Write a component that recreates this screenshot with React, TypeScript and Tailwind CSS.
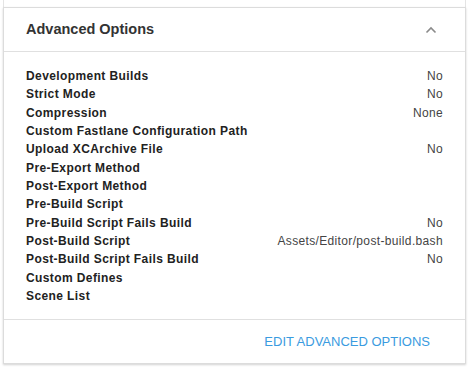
import React from 'react';

const options: { label: string; value?: string }[] = [
  { label: 'Development Builds', value: 'No' },
  { label: 'Strict Mode', value: 'No' },
  { label: 'Compression', value: 'None' },
  { label: 'Custom Fastlane Configuration Path' },
  { label: 'Upload XCArchive File', value: 'No' },
  { label: 'Pre-Export Method' },
  { label: 'Post-Export Method' },
  { label: 'Pre-Build Script' },
  { label: 'Pre-Build Script Fails Build', value: 'No' },
  { label: 'Post-Build Script', value: 'Assets/Editor/post-build.bash' },
  { label: 'Post-Build Script Fails Build', value: 'No' },
  { label: 'Custom Defines' },
  { label: 'Scene List' },
];

export default function App() {
  return (
    <div className="w-[474px] h-[369px] bg-white font-['Liberation_Sans',Arial,sans-serif] overflow-hidden">
      {/* tail of the card above */}
      <div className="ml-[3px] w-[463px] h-[7px] border-x border-[#e4e4e4]" />

      <div className="ml-[3px] w-[463px] border border-[#dcdcdc] bg-white shadow-[0_1px_2px_rgba(0,0,0,0.18)]">
        {/* Header */}
        <div className="h-[44px] flex items-center justify-between pl-[22px] pr-[28px] border-b border-[#e0e0e0]">
          <h2 className="text-[14.5px] font-bold text-[#333]">Advanced Options</h2>
          <svg width="12" height="8" viewBox="0 0 12 8" fill="none">
            <path d="M1.5 6.5 L6 2 L10.5 6.5" stroke="#8a8a8a" strokeWidth="1.6" />
          </svg>
        </div>

        {/* Options */}
        <div className="pt-[15px] pb-[14px] px-[22px]">
          {options.map((opt) => (
            <div key={opt.label} className="flex justify-between items-center h-[18.33px] text-[12px] leading-[18px]">
              <span className="font-bold text-[#222] tracking-[0.4px]">{opt.label}</span>
              {opt.value && <span className="text-[#444] tracking-[0.35px]">{opt.value}</span>}
            </div>
          ))}
        </div>

        {/* Footer */}
        <div className="h-[44px] flex items-center justify-end pr-[35px] border-t border-[#e0e0e0]">
          <button className="text-[13px] text-[#3a9be0] uppercase">Edit Advanced Options</button>
        </div>
      </div>
    </div>
  );
}
